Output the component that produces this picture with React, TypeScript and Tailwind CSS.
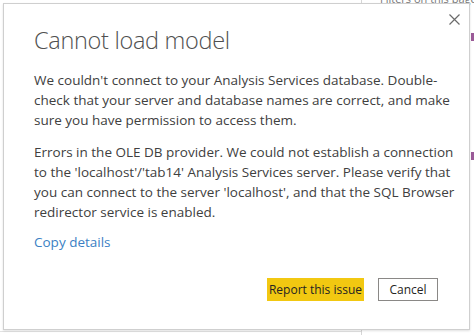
import React from "react";

export default function App() {
  const font = { fontFamily: '"Open Sans", "Noto Sans", sans-serif' };
  return (
    <div className="relative w-[474px] h-[335px] bg-white overflow-hidden" style={font}>
      {/* background window fragments */}
      <div className="absolute left-[361px] top-0 w-[113px] h-[335px] border-l border-[#d6d6d6]">
        <div className="absolute left-[18px] top-[-8px] text-[11px] leading-[14px] text-[#777] whitespace-nowrap">Filters on this page</div>
        <div className="absolute right-0 top-[33px] w-[3px] h-[8px] bg-[#9b5a98]" />
        <div className="absolute right-0 top-[152px] w-[3px] h-[8px] bg-[#9b5a98]" />
      </div>
      <div className="absolute left-0 top-[331px] w-[361px] h-px bg-[#e2e2e2]" />

      {/* dialog */}
      <div className="absolute left-[3px] top-[3px] w-[467px] h-[327px] bg-white border border-[#cfcfcf] shadow-[0_1px_2px_rgba(0,0,0,0.12)]">
        <button className="absolute left-[443px] top-[8px] w-[14px] h-[14px] flex items-center justify-center">
          <svg width="11" height="11" viewBox="0 0 11 11">
            <path d="M0.5 0.5 L10.5 10.5 M10.5 0.5 L0.5 10.5" stroke="#6b6b6b" strokeWidth="1.2" fill="none" />
          </svg>
        </button>
        <div className="pl-[30px] pr-[30px] pt-[19px] flex flex-col">
          <h1 className="text-[23.5px] leading-[34px] font-light text-[#505050] tracking-[-0.3px] whitespace-nowrap">
            Cannot load model
          </h1>
          <div className="mt-[13px] text-[13.5px] leading-[20px] text-[#404040] whitespace-nowrap">
            <div>We couldn't connect to your Analysis Services database. Double-</div>
            <div>check that your server and database names are correct, and make</div>
            <div>sure you have permission to access them.</div>
          </div>
          <div className="mt-[12px] text-[13.5px] leading-[20px] text-[#404040] whitespace-nowrap">
            <div>Errors in the OLE DB provider. We could not establish a connection</div>
            <div>to the 'localhost'/'tab14' Analysis Services server. Please verify that</div>
            <div>you can connect to the server 'localhost', and that the SQL Browser</div>
            <div>redirector service is enabled.</div>
          </div>
          <div className="mt-[10px] text-[13.5px] leading-[20px] text-[#3b7fc4]">Copy details</div>
          <div className="mt-[26px] flex justify-end gap-[14px] pr-[1px]">
            <button className="w-[97px] h-[23px] bg-[#f2c811] text-[12px] text-[#252423] flex items-center justify-center">
              Report this issue
            </button>
            <button className="w-[60px] h-[23px] bg-white border border-[#8a8886] text-[12px] text-[#252423] flex items-center justify-center">
              Cancel
            </button>
          </div>
        </div>
      </div>
    </div>
  );
}
